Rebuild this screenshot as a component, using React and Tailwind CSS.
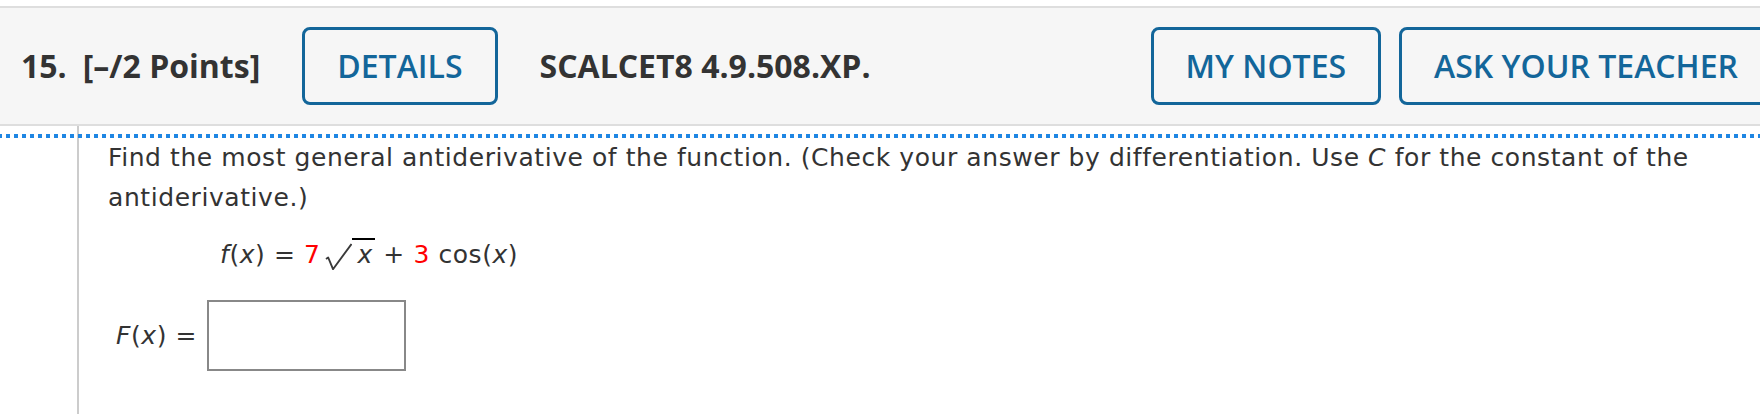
export default function App() {
  return (
    <div className="w-[1760px] h-[414px] overflow-hidden bg-white">
      <div className="h-[6px]" />
      <header className="flex items-center h-[120px] border-t-2 border-b-2 border-[#dedede] bg-[#f6f6f6] pl-[21px] whitespace-nowrap font-['Open_Sans',sans-serif] text-[32px] leading-none text-[#333]">
        <span className="font-bold shrink-0">15.</span>
        <span className="font-bold shrink-0 ml-[16px]">[–/2 Points]</span>
        <button className="shrink-0 ml-[42px] h-[78px] px-[32px] border-[3px] border-[#13669a] rounded-[8px] font-semibold text-[#13669a]">
          DETAILS
        </button>
        <span className="font-bold shrink-0 ml-[42px]">SCALCET8 4.9.508.XP.</span>
        <button className="shrink-0 ml-[280px] h-[78px] px-[32px] border-[3px] border-[#13669a] rounded-[8px] font-semibold text-[#13669a]">
          MY NOTES
        </button>
        <button className="shrink-0 ml-[18px] h-[78px] px-[32px] border-[3px] border-[#13669a] rounded-[8px] font-semibold text-[#13669a]">
          ASK YOUR TEACHER
        </button>
      </header>
      <div className="relative flex h-[288px]">
        <div className="w-[77px] shrink-0" />
        <div className="flex-1 border-l-2 border-[#cccccc] pl-[29px] pt-[12px] font-['DejaVu_Sans',Verdana,sans-serif] text-[25px] leading-[40px] tracking-[0.57px] text-[#333]">
          <p className="whitespace-nowrap">
            Find the most general antiderivative of the function. (Check your answer by differentiation. Use <i>C</i> for the constant of the
            <br />
            antiderivative.)
          </p>
          <div className="mt-[17px] ml-[112px] whitespace-nowrap">
            <i>f</i>(<i>x</i>) = <span className="text-[#ff0000]">7</span>
            <svg className="inline-block ml-[5px]" width="27" height="27" viewBox="0 0 27 27">
              <path d="M1 16 L3.2 14.5 L8 26.2 L26.5 1" fill="none" stroke="#3a3a3a" strokeWidth="1.9" strokeLinejoin="round" />
            </svg>
            <span className="border-t-2 border-black pl-[5px] pr-[2px]"><i>x</i></span> + <span className="text-[#ff0000]">3</span> cos(<i>x</i>)
          </div>
          <div className="mt-[25px] ml-[8px] flex items-center whitespace-nowrap">
            <span><i>F</i>(<i>x</i>) =</span>
            <div className="ml-[10px] w-[199px] h-[71px] border-2 border-[#888] bg-white" />
          </div>
        </div>
        <div className="absolute left-0 right-0 top-[8px] h-[4px] bg-[repeating-linear-gradient(90deg,#1e86e3_0px,#1e86e3_2px,transparent_2px,transparent_6px,#1e86e3_6px,#1e86e3_8px)]" />
      </div>
    </div>
  );
}
